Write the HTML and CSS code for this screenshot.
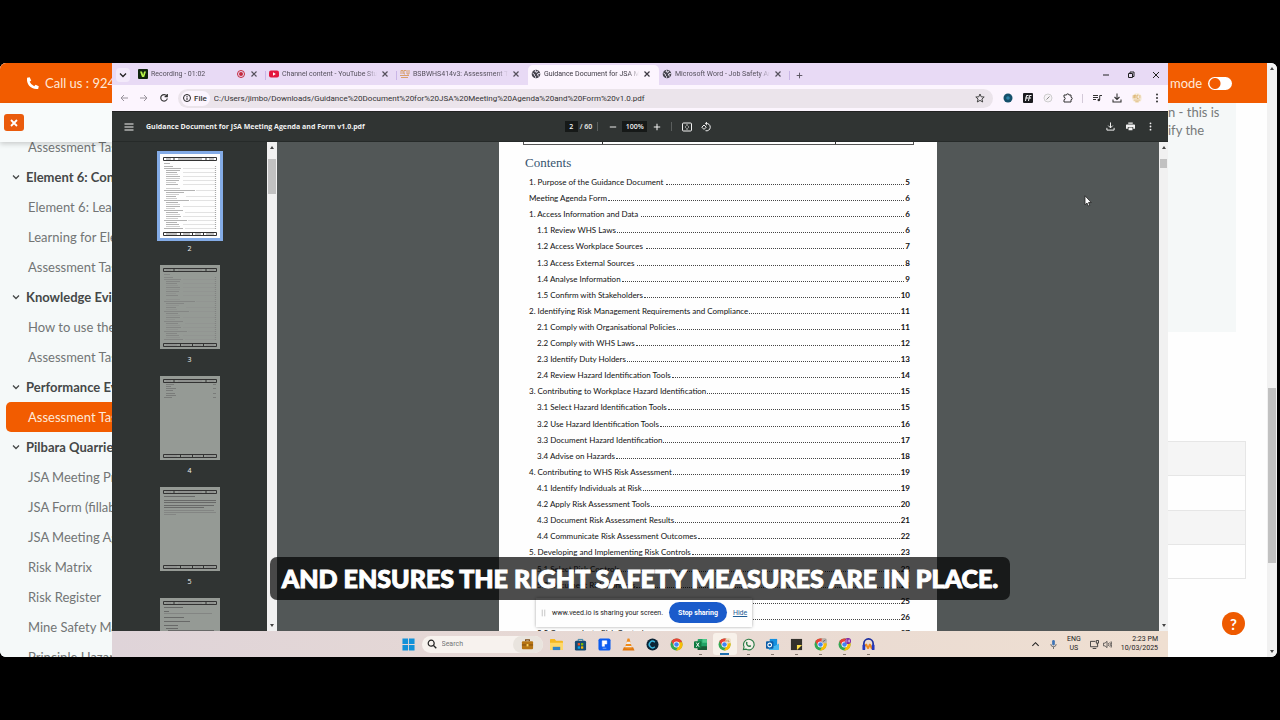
FILE: index.html
```
<!DOCTYPE html>
<html lang="en">
<head>
    <meta charset="UTF-8">
    <meta name="viewport" content="width=device-width, initial-scale=1.0">
    <title>Guidance Document for JSA Meeting Agenda and Form v1.0.pdf</title>
    <link rel="stylesheet" href="styles.css">
</head>
<body>
    <!-- Shared icon shapes -->
    <svg class="defs" width="0" height="0" aria-hidden="true">
        <symbol id="x" viewBox="0 0 10 10"><path d="M2.500 2.500l5 5M7.500 2.500l-5 5" fill="none" stroke="currentColor" stroke-width="1.200"/></symbol>
        <symbol id="chev" viewBox="0 0 10 10"><path d="M2 3.500l3 3 3-3" fill="none" stroke="currentColor" stroke-width="1.3"/></symbol>
        <symbol id="plus" viewBox="0 0 10 10"><path d="M5 1v8M1 5h8" fill="none" stroke="currentColor" stroke-width="1.3"/></symbol>
        <symbol id="minus" viewBox="0 0 10 10"><path d="M1 5h8" fill="none" stroke="currentColor" stroke-width="1.2"/></symbol>
        <symbol id="dots" viewBox="0 0 10 10"><g fill="currentColor"><circle cx="5" cy="1.5" r="1"/><circle cx="5" cy="5" r="1"/><circle cx="5" cy="8.5" r="1"/></g></symbol>
        <symbol id="download" viewBox="0 0 10 10"><path d="M5 .5v6M2.5 4L5 6.5 7.500 4M1 6.500V9h8V6.500" fill="none" stroke="currentColor" stroke-width="1.1"/></symbol>
        <symbol id="globe" viewBox="0 0 10 10"><circle cx="5" cy="5" r="4.300" fill="#484650"/><path d="M1.500 4l2 1.500v1l1 1v1.200M4.500 1.200l-.5 1.300 2 .8 .5-1.500M8.800 4.500l-2 .3-.3 1.400 1.300 1" fill="none" stroke="#f1e9f8" stroke-width="1"/></symbol>
        <symbol id="chrome" viewBox="0 0 24 24"><circle cx="12" cy="12" r="11" fill="#34a853"/><path d="M2.500 6.500A11 11 0 0 1 22.500 8H12l-4.500 6.500z" fill="#ea4335"/><path d="M22.500 8A11 11 0 0 1 11 23l5-8.700L12 8z" fill="#fbbc05"/><circle cx="12" cy="12" r="5.500" fill="#fff"/><circle cx="12" cy="12" r="4.200" fill="#4285f4"/></symbol>
        <symbol id="frame" viewBox="0 0 60 84">
            <path d="M3.500 3.500h53v3h-53zM14 3.500v3M46 3.500v3M3.500 78.500h53v3h-53zM20.500 78v4M32.500 78v4M43.500 78v4" fill="none" stroke="#333" stroke-width="1"/>
            <path d="M18 5h24M6 5h5M49 5h5M6 80h11M23 80h7M35 80h6M46 80h8" stroke="#888" stroke-width="1"/>
        </symbol>
        <symbol id="lines" viewBox="0 0 60 84">
            <path d="M4 9.500h6M4 12.500h9M4 14.500h17M6 16.500h14M6 18.500h11M6 22.500h14M6 26.500h13M6 30.500h12M4 36.500h31M6 38.500h18M6 42.500h10M4 46.500h25M6 48.500h12M6 52.500h14M4 56.500h19M6 58.500h12M6 62.500h15M4 66.500h23M6 68.500h11M6 70.500h13M4 74.500h19" stroke="#777" stroke-opacity=".8" stroke-width=".7"/>
            <path d="M6 20.500h12M6 24.500h14M6 28.500h10M6 34.500h14M6 40.500h13M6 44.500h11M6 50.500h14M6 54.500h9M6 60.500h14M6 64.500h12M6 72.500h14" stroke="#888" stroke-opacity=".8" stroke-width=".5"/>
            <path d="M23 14.500h33M23 18.500h33M23 22.500h33M23 26.500h33M23 30.500h33M36 36.500h20M26 42.500h30M30 46.500h26M23 52.500h33M25 58.500h31M23 62.500h33M28 66.500h28M23 70.500h33M25 74.500h31" stroke="#888" stroke-opacity=".6" stroke-width=".4"/>
            <path d="M55.500 12v63" stroke="#777" stroke-opacity=".6" stroke-width="1.200" stroke-dasharray="1 1"/>
        </symbol>
    </svg>

    <main class="screen">
        <!-- Course menu on the left -->
        <aside class="course">
            <div class="topbar">
                <svg class="phone" viewBox="0 0 12 12"><path d="M1 .8l2.400-.6 1.400 3-1.400 1.200a8 8 0 0 0 4.200 4.200l1.200-1.400 3 1.400-.6 2.400C5 12 0 7 1 .8z" fill="#fff"/></svg>
                <span>Call us : 9240</span>
            </div>
            <div class="closebar">
                <button class="close" aria-label="Close menu"><svg viewBox="0 0 10 10"><path d="M2 2l6 6M8 2l-6 6" stroke="#fff" stroke-width="1.800"/></svg></button>
            </div>
            <nav class="menu">
                <a href="#">Assessment Task</a>
                <a href="#" class="group"><svg viewBox="0 0 10 10"><use href="#chev"/></svg>Element 6: Contribute</a>
                <a href="#">Element 6: Learning</a>
                <a href="#">Learning for Element</a>
                <a href="#">Assessment Task</a>
                <a href="#" class="group"><svg viewBox="0 0 10 10"><use href="#chev"/></svg>Knowledge Evidence</a>
                <a href="#">How to use these</a>
                <a href="#">Assessment Task</a>
                <a href="#" class="group"><svg viewBox="0 0 10 10"><use href="#chev"/></svg>Performance Evidence</a>
                <a href="#" class="current">Assessment Task</a>
                <a href="#" class="group"><svg viewBox="0 0 10 10"><use href="#chev"/></svg>Pilbara Quarries</a>
                <a href="#">JSA Meeting Process</a>
                <a href="#">JSA Form (fillable)</a>
                <a href="#">JSA Meeting Agenda</a>
                <a href="#">Risk Matrix</a>
                <a href="#">Risk Register</a>
                <a href="#">Mine Safety Manual</a>
                <a href="#">Principle Hazards</a>
            </nav>
        </aside>

        <div class="desktop">
            <section class="browser">
                <div class="tabs">
                    <button class="tabsearch" aria-label="Search tabs"><svg viewBox="0 0 10 10"><use href="#chev"/></svg></button>
                    <div class="tab">
                        <svg viewBox="0 0 10 10"><rect width="10" height="10" rx="1" fill="#10240e"/><path d="M2 2.500h2L5.200 6 6 2.500h2L6.200 8H4z" fill="#b6f34a"/></svg>
                        <span>Recording - 01:02</span>
                        <svg viewBox="0 0 10 10"><circle cx="5" cy="5" r="3.500" fill="none" stroke="#c5283d"/><circle cx="5" cy="5" r="2" fill="#c5283d"/></svg>
                        <button aria-label="Close tab"><svg viewBox="0 0 10 10"><use href="#x"/></svg></button>
                    </div>
                    <div class="tab">
                        <svg viewBox="0 0 10 10"><rect y="1.500" width="10" height="7" rx="2" fill="#e3173f"/><path d="M4 3.300v3.400L6.800 5z" fill="#fff"/></svg>
                        <span>Channel content - YouTube Studio</span>
                        <button aria-label="Close tab"><svg viewBox="0 0 10 10"><use href="#x"/></svg></button>
                    </div>
                    <div class="tab noline">
                        <svg viewBox="0 0 10 10"><path d="M1 5V1.500h2V5M5 5H4V1.500h2M7 1v4h2V1M0 6.500h9M1 8.500h7" fill="none" stroke="#d9a06c"/></svg>
                        <span>BSBWHS414v3: Assessment Task</span>
                        <button aria-label="Close tab"><svg viewBox="0 0 10 10"><use href="#x"/></svg></button>
                    </div>
                    <div class="tab active">
                        <svg viewBox="0 0 10 10"><use href="#globe"/></svg>
                        <span>Guidance Document for JSA Meeting</span>
                        <button aria-label="Close tab"><svg viewBox="0 0 10 10"><use href="#x"/></svg></button>
                    </div>
                    <div class="tab">
                        <svg viewBox="0 0 10 10"><use href="#globe"/></svg>
                        <span>Microsoft Word - Job Safety Analysis</span>
                        <button aria-label="Close tab"><svg viewBox="0 0 10 10"><use href="#x"/></svg></button>
                    </div>
                    <button class="newtab" aria-label="New tab"><svg viewBox="0 0 10 10"><use href="#plus"/></svg></button>
                    <div class="winbtns">
                        <button aria-label="Minimize"><svg viewBox="0 0 10 10"><path d="M2 5h6" stroke="#222"/></svg></button>
                        <button aria-label="Restore"><svg viewBox="0 0 10 10"><path d="M2.500 3.500h4v4h-4zM4 3.500V2h4v4.500H6.500" fill="none" stroke="#222"/></svg></button>
                        <button aria-label="Close"><svg viewBox="0 0 10 10"><path d="M2 2l6 6M8 2l-6 6" stroke="#222"/></svg></button>
                    </div>
                </div>

                <div class="addressbar">
                    <button class="dim" aria-label="Back"><svg viewBox="0 0 10 10"><path d="M9 5H2M5 2L2 5l3 3" fill="none" stroke="currentColor"/></svg></button>
                    <button class="dim" aria-label="Forward"><svg viewBox="0 0 10 10"><path d="M1 5h7M5 2l3 3-3 3" fill="none" stroke="currentColor"/></svg></button>
                    <button aria-label="Reload"><svg viewBox="0 0 10 10"><path d="M7.800 3A3.300 3.300 0 1 0 8.300 5.500M8.300 1v2.700H5.600" fill="none" stroke="currentColor" stroke-width="1.200"/></svg></button>
                    <div class="omnibox">
                        <label class="chip" for="url"><svg viewBox="0 0 10 10"><circle cx="5" cy="5" r="3.500" fill="none" stroke="#222"/><path d="M5 4.500v2.500M5 3v1" stroke="#222"/></svg>File</label>
                        <input id="url" type="text" value="C:/Users/jimbo/Downloads/Guidance%20Document%20for%20JSA%20Meeting%20Agenda%20and%20Form%20v1.0.pdf">
                        <svg viewBox="0 0 10 10"><path d="M5 1l1.200 2.800 3 .2-2.300 2 .8 3L5 7.400 2.300 9l.8-3-2.300-2 3-.2z" fill="none" stroke="#444"/></svg>
                    </div>
                    <div class="extensions">
                        <button aria-label="Extension"><svg viewBox="0 0 10 10"><circle cx="5" cy="5" r="4.500" fill="#14506b"/><circle cx="5" cy="5" r="1.800" fill="#2b83a8"/></svg></button>
                        <button aria-label="Font finder"><svg viewBox="0 0 10 10"><rect width="10" height="10" rx="1" fill="#1b1b1f"/><path d="M2.500 8l1-5.500h2M2.500 5h2.500M5.500 8l1-5.500h2M5.600 5h2.500" fill="none" stroke="#fff"/></svg></button>
                        <button aria-label="Extension"><svg viewBox="0 0 10 10"><circle cx="5" cy="5" r="4" fill="#f6f2f6" stroke="#bbb" stroke-width=".7"/><path d="M3.500 6.500l3-3" stroke="#888"/></svg></button>
                        <button aria-label="Extensions"><svg viewBox="0 0 10 10"><path d="M1 2h2.500a1.200 1.200 0 0 1 2.400 0H8v2.300a1.200 1.200 0 0 1 0 2.400V9H1V6.700a1.200 1.200 0 0 0 0-2.400z" fill="none" stroke="#333"/></svg></button>
                        <i class="sep"></i>
                        <button aria-label="Media"><svg viewBox="0 0 10 10"><path d="M1 2.500h5M1 4.500h5M1 6.500h3M7.700 7V2.500H10" fill="none" stroke="#333"/><circle cx="6.800" cy="7" r="1.300" fill="#333"/></svg></button>
                        <button aria-label="Downloads"><svg viewBox="0 0 10 10"><use href="#download"/></svg></button>
                        <button aria-label="Profile"><svg viewBox="0 0 12 12"><circle cx="6" cy="6" r="6" fill="#f8efe2"/><path d="M1.500 2.500v4M3 6.500v-4h1.500v4M8 6.500H6v-4h2M9.500 2.500v4M2 8.500h8M4 10.500h4" fill="none" stroke="#d3a14f" stroke-width=".8"/></svg></button>
                        <button aria-label="Browser menu"><svg viewBox="0 0 10 10"><use href="#dots"/></svg></button>
                    </div>
                </div>

                <div class="pdfbar">
                    <div class="pdftitle">
                        <button aria-label="Menu"><svg viewBox="0 0 10 10"><path d="M0.500 2h9M0.500 5h9M0.500 8h9" stroke="currentColor" stroke-width="1.200"/></svg></button>
                        <span>Guidance Document for JSA Meeting Agenda and Form v1.0.pdf</span>
                    </div>
                    <div class="pdftools">
                        <input class="pageno" type="text" value="2" aria-label="Page number"><span>/ 60</span>
                        <i class="sep"></i>
                        <button aria-label="Zoom out"><svg viewBox="0 0 10 10"><use href="#minus"/></svg></button>
                        <input class="zoom" type="text" value="100%" aria-label="Zoom level">
                        <button aria-label="Zoom in"><svg viewBox="0 0 10 10"><use href="#plus"/></svg></button>
                        <i class="sep"></i>
                        <button aria-label="Fit to page"><svg viewBox="0 0 10 10"><rect x=".5" y="1" width="9" height="8" rx="1" fill="none" stroke="currentColor"/><path d="M5 2.300v1.500M5 6.200v1.500M3 5h1M6 5h1" stroke="currentColor"/></svg></button>
                        <button aria-label="Rotate"><svg viewBox="0 0 10 10"><path d="M5 1.500a3.700 3.700 0 1 1-.5 7.200M6 0L4.300 1.500 6 3.200M3 3L.8 5.200 3 7.400l2.200-2.200z" fill="none" stroke="currentColor"/></svg></button>
                    </div>
                    <div class="pdfactions">
                        <button aria-label="Download"><svg viewBox="0 0 10 10"><use href="#download"/></svg></button>
                        <button aria-label="Print"><svg viewBox="0 0 10 10"><path d="M2.500.5h5v1.500h-5zM0 3.500q0-.8.800-.8h8.400q.8 0 .8.800V7.500H8V5.500H2v2H0zM2.800 6.200h4.400v3H2.800z" fill="currentColor"/></svg></button>
                        <button aria-label="More"><svg viewBox="0 0 10 10"><use href="#dots"/></svg></button>
                    </div>
                </div>

                <div class="viewer">
                    <div class="thumbs">
                        <figure class="selected">
                            <svg viewBox="0 0 60 84"><use href="#frame"/><use href="#lines"/></svg>
                            <figcaption>2</figcaption>
                        </figure>
                        <figure>
                            <svg viewBox="0 0 60 84"><use href="#frame"/><use href="#lines"/></svg>
                            <figcaption>3</figcaption>
                        </figure>
                        <figure>
                            <svg viewBox="0 0 60 84"><use href="#frame"/><path d="M6 8.500h8M6 10.500h5M6 12.500h10M6 14.500h7M6 17.500h9M6 19.500h10M4 21.500h8M53 8.500h3M53 12.500h3M53 17.500h3M53 21.500h3" stroke="#666" stroke-width=".6"/></svg>
                            <figcaption>4</figcaption>
                        </figure>
                        <figure>
                            <svg viewBox="0 0 60 84"><use href="#frame"/><path d="M4 9.500h31M4 13.500h52M4 15.500h52M4 18.500h50M4 20.500h40" stroke="#555" stroke-width=".7"/><path d="M4 23.500h50M4 25.500h52M4 27.500h12" stroke="#777" stroke-width=".6"/></svg>
                            <figcaption>5</figcaption>
                        </figure>
                        <figure>
                            <svg viewBox="0 0 60 84"><use href="#frame"/><path d="M4 9.500h19M4 13.500h5M4 19.500h20M4 23.500h26M4 27.500h14M6 30.500h12M8 32.500h46" stroke="#555" stroke-width=".7"/><path d="M4 15.500h48" stroke="#777" stroke-width=".6"/></svg>
                        </figure>
                    </div>
                    <div class="scrollbar"><i class="up"></i><i class="grip long"></i><i class="down"></i></div>
                    <div class="canvas">
                        <article class="page">
                            <div class="headrow"><i></i><i></i><i></i></div>
                            <h1>Contents</h1>
                            <ol class="toc">
                                <li>1. Purpose of the Guidance Document <i></i><b>5</b></li>
                                <li>Meeting Agenda Form<i></i><b>6</b></li>
                                <li>1. Access Information and Data <i></i><b>6</b></li>
                                <li class="sub">1.1 Review WHS Laws<i></i><b>6</b></li>
                                <li class="sub">1.2 Access Workplace Sources <i></i><b>7</b></li>
                                <li class="sub">1.3 Access External Sources <i></i><b>8</b></li>
                                <li class="sub">1.4 Analyse Information<i></i><b>9</b></li>
                                <li class="sub">1.5 Confirm with Stakeholders<i></i><b>10</b></li>
                                <li>2. Identifying Risk Management Requirements and Compliance<i></i><b>11</b></li>
                                <li class="sub">2.1 Comply with Organisational Policies<i></i><b>11</b></li>
                                <li class="sub">2.2 Comply with WHS Laws<i></i><b>12</b></li>
                                <li class="sub">2.3 Identify Duty Holders<i></i><b>13</b></li>
                                <li class="sub">2.4 Review Hazard Identification Tools<i></i><b>14</b></li>
                                <li>3. Contributing to Workplace Hazard Identification<i></i><b>15</b></li>
                                <li class="sub">3.1 Select Hazard Identification Tools<i></i><b>15</b></li>
                                <li class="sub">3.2 Use Hazard Identification Tools<i></i><b>16</b></li>
                                <li class="sub">3.3 Document Hazard Identification<i></i><b>17</b></li>
                                <li class="sub">3.4 Advise on Hazards<i></i><b>18</b></li>
                                <li>4. Contributing to WHS Risk Assessment<i></i><b>19</b></li>
                                <li class="sub">4.1 Identify Individuals at Risk<i></i><b>19</b></li>
                                <li class="sub">4.2 Apply Risk Assessment Tools<i></i><b>20</b></li>
                                <li class="sub">4.3 Document Risk Assessment Results<i></i><b>21</b></li>
                                <li class="sub">4.4 Communicate Risk Assessment Outcomes<i></i><b>22</b></li>
                                <li>5. Developing and Implementing Risk Controls<i></i><b>23</b></li>
                                <li class="sub">5.1 Select Risk Controls<i></i><b>23</b></li>
                                <li class="sub">5.2 Document Risk Controls<i></i><b>24</b></li>
                                <li class="sub">5.3 Develop Risk Controls<i></i><b>25</b></li>
                                <li class="sub">5.4 Implement Risk Controls<i></i><b>26</b></li>
                                <li class="sub">5.5 Communicate Risk Controls<i></i><b>27</b></li>
                            </ol>
                        </article>
                    </div>
                    <div class="scrollbar"><i class="up"></i><i class="grip short"></i><i class="down"></i></div>
                </div>
            </section>

            <footer class="taskbar">
                <div class="apps">
                    <button aria-label="Start"><svg viewBox="0 0 14 14"><path d="M.5.500h6v6h-6zM7.500.500h6v6h-6zM.5 7.500h6v6h-6zM7.500 7.500h6v6h-6z" fill="#1291d8"/></svg></button>
                    <div class="search">
                        <svg viewBox="0 0 10 10"><circle cx="4.200" cy="4.200" r="3" fill="none" stroke="#222" stroke-width="1.200"/><path d="M6.500 6.500L9.300 9.300" stroke="#222" stroke-width="1.300"/></svg>
                        <input type="text" placeholder="Search" aria-label="Search">
                        <span class="case"><svg viewBox="0 0 14 14"><path d="M5 3.500V2h4v1.500" fill="none" stroke="#7b4a12" stroke-width="1.300"/><rect x="1" y="3.500" width="12" height="8.500" rx="1" fill="#b77513"/><path d="M1 7.500h12" stroke="#7b4a12"/><rect x="6" y="6.500" width="2" height="2.500" fill="#ffd65c"/></svg></span>
                    </div>
                    <button aria-label="Files"><svg viewBox="0 0 14 14"><path d="M0 2q0-1 1-1h4l1.500 2H13q1 0 1 1v8q0 1-1 1H1q-1 0-1-1z" fill="#f5b820"/><path d="M0 5h14v7q0 1-1 1H1q-1 0-1-1z" fill="#ffd867"/><path d="M3 13V9.500h8V13z" fill="#3285c7"/></svg></button>
                    <button aria-label="Store"><svg viewBox="0 0 14 14"><path d="M4.500 4V1.500h5V4" fill="none" stroke="#2e7ea8"/><rect x="1" y="3" width="12" height="10.500" rx="1.500" fill="#164b73"/><path d="M4 5.500h2.500V8H4z" fill="#f25022"/><path d="M7.500 5.500H10V8H7.500z" fill="#7fba00"/><path d="M4 9h2.500v2.500H4z" fill="#00a4ef"/><path d="M7.500 9H10v2.500H7.500z" fill="#ffb900"/></svg></button>
                    <button aria-label="Dropbox"><svg viewBox="0 0 14 14"><rect x=".5" y=".5" width="13" height="13" rx="2" fill="#0b5cf0"/><path d="M4.500 3h5v3.500H7V9H4.500zM5 11h4" fill="#fff" stroke="#fff" stroke-width=".5"/></svg></button>
                    <button aria-label="VLC"><svg viewBox="0 0 14 14"><path d="M2 10h10l1.500 3.500H.5z" fill="#e07912"/><path d="M6 .5h2l3 10.500q-4 1.500-8 0z" fill="#ef8a1c"/><path d="M5 4h4l.7 2.500H4.300zM3.700 8.500h6.600l.4 1.500H3.300z" fill="#eee"/></svg></button>
                    <button aria-label="Recorder"><svg viewBox="0 0 14 14"><circle cx="7" cy="7" r="6.500" fill="#0b2436"/><path d="M9.500 4.500A3.500 3.500 0 1 0 9.500 9.500" fill="none" stroke="#36b5dd" stroke-width="1.600"/></svg></button>
                    <button aria-label="Chrome"><svg viewBox="0 0 14 14"><use href="#chrome"/></svg></button>
                    <button class="run" aria-label="Excel"><svg viewBox="0 0 14 14"><rect x="4" y="1" width="10" height="12" rx="1" fill="#21a366"/><path d="M9 1h4q1 0 1 1v3H9z" fill="#4cc98a"/><path d="M4 9h10v3q0 1-1 1H4z" fill="#185c37"/><rect y="3.500" width="8" height="7.500" rx="1" fill="#107c41"/><path d="M2.500 5l3 4.500M5.500 5l-3 4.500" stroke="#fff"/></svg></button>
                    <button class="run on" aria-label="Chrome, profile 1"><svg viewBox="0 0 14 14"><use href="#chrome"/><circle cx="11" cy="3" r="3" fill="#eee0c8"/><path d="M9.500 2v2M11 2v2h1.500" stroke="#a77a3a" stroke-width=".7" fill="none"/></svg></button>
                    <button class="run" aria-label="WhatsApp"><svg viewBox="0 0 14 14"><path d="M1.500 12.500l.7-3A5.700 5.700 0 1 1 4.500 12z" fill="#f4efe8" stroke="#2a7c46" stroke-width="1.200"/><path d="M4.500 4.300q.8-.8 1.300.2l.3 1-.6.800q.8 1.500 2.200 2.100l.8-.8 1.400.7q0 1.500-1.700 1.500-3.700-.8-4-4.200 0-.8.300-1.300z" fill="#2a7c46"/></svg></button>
                    <button class="run" aria-label="Outlook"><svg viewBox="0 0 14 14"><path d="M4 1h8v8H4z" fill="#1490df"/><path d="M3 6l6 3 5-3v6q0 1-1 1H4q-1 0-1-1z" fill="#42b7f0"/><rect y="3.500" width="8" height="8" rx="1" fill="#0a5ca8"/><circle cx="4" cy="7.500" r="2" fill="none" stroke="#fff" stroke-width="1.200"/></svg></button>
                    <button class="run" aria-label="Sticky Notes"><svg viewBox="0 0 14 14"><path d="M1 1h12v12H1z" fill="#34322c"/><path d="M7.500 13V7.500H13z" fill="#ffe14a"/></svg></button>
                    <button class="run" aria-label="Chrome, profile 2"><svg viewBox="0 0 14 14"><use href="#chrome"/><circle cx="11" cy="3" r="3" fill="#bbb4ad"/><path d="M9.500 4l3-2" stroke="#666"/></svg></button>
                    <button class="run" aria-label="Chrome, profile 3"><svg viewBox="0 0 14 14"><use href="#chrome"/><circle cx="10.800" cy="3.200" r="3.200" fill="#7a1fa2"/><path d="M10.300 2.300a1.200 1.200 0 1 0 0 1.800M11.500 2v2.400h1V2z" fill="none" stroke="#fff" stroke-width=".6"/></svg></button>
                    <button class="run" aria-label="Audacity"><svg viewBox="0 0 14 14"><path d="M2 8V6a5 5 0 0 1 10 0v2" fill="none" stroke="#1b2d9e" stroke-width="1.800"/><path d="M3.500 9q1-4 2 0t2 0 2 0 1 0" fill="none" stroke="#f08a1a" stroke-width="2"/><rect x=".5" y="7" width="3" height="6" rx="1" fill="#2438c0"/><rect x="10.500" y="7" width="3" height="6" rx="1" fill="#2438c0"/></svg></button>
                </div>
                <div class="tray">
                    <svg viewBox="0 0 10 10"><path d="M1.500 6.500L5 3l3.500 3.500" fill="none" stroke="#222" stroke-width="1.200"/></svg>
                    <svg viewBox="0 0 10 10"><rect x="3.500" y="0" width="3" height="6" rx="1.500" fill="#3f74b5"/><path d="M2 4.500a3 3 0 0 0 6 0M5 7.500V10" fill="none" stroke="#666"/></svg>
                    <span class="lang">ENG<br>US</span>
                    <span class="status">
                        <svg viewBox="0 0 10 10"><path d="M6 1.500H.5v6h8V5M3 9.500h4M7 .5h2.500v3H7zM8.200 3.500v2" fill="none" stroke="#333"/></svg>
                        <svg viewBox="0 0 10 10"><path d="M.5 3.500h1.700L4.500 1.500v7L2.200 6.500H.5zM6 3.500q1 1.500 0 3M7.500 2.500q2 2.500 0 5M9 1.500q1.500 3.500 0 7" fill="none" stroke="#333" stroke-width=".8"/></svg>
                    </span>
                    <time>2:23 PM<br>10/03/2025</time>
                </div>
            </footer>
        </div>

        <!-- Course page on the right -->
        <section class="lesson">
            <div class="topbar">
                <label for="mode">mode</label>
                <input id="mode" type="checkbox">
            </div>
            <div class="note">n - this is<br>ify the</div>
            <table>
                <tr><td></td></tr>
                <tr><td></td></tr>
                <tr><td></td></tr>
                <tr><td></td></tr>
            </table>
            <button class="help">?</button>
        </section>
        <div class="scrollbar outer"><i class="up"></i><i class="grip"></i><i class="down"></i></div>

        <div class="sharing">
            <svg viewBox="0 0 6 10"><path d="M1.500 1v8M4.500 1v8" stroke="#bbb"/></svg>
            <span>www.veed.io is sharing your screen.</span>
            <button>Stop sharing</button>
            <a href="#">Hide</a>
        </div>
        <svg class="cursor" viewBox="0 0 8 12"><path d="M1 .8v9l2-1.800 1.300 3 1.500-.7L4.500 7.500h2.800z" fill="#fff" stroke="#222" stroke-width=".8"/></svg>
        <p class="caption">AND ENSURES THE RIGHT SAFETY MEASURES ARE IN PLACE.</p>
    </main>
</body>
</html>
```
FILE: styles.css
```
* {
    box-sizing: border-box;
}
body {
    margin: 0;
    padding: 63px 0;
    min-height: 100vh;
    background: #000;
    font-family: Roboto, "Noto Sans", sans-serif;
    font-size: 7px;
    color: #222;
}
.defs {
    position: absolute;
}
button, input {
    font: inherit;
    color: inherit;
    padding: 0;
    border: none;
    background: none;
}
button {
    display: flex;
    align-items: center;
    justify-content: center;
    cursor: pointer;
}
svg {
    display: block;
    flex: none;
    width: 10px;
    height: 10px;
}
.screen {
    position: relative;
    display: grid;
    grid-template-columns: 112px 1fr 99px 10px;
    grid-template-rows: 100%;
    height: calc(100vh - 126px);
    margin-right: 3px;
    border-radius: 6px;
    overflow: hidden;
    background: #fefefe;
}

/* left menu */
.course {
    overflow: hidden;
    background: #f5f9f9;
    font-family: Lato, sans-serif;
    font-size: 13px;
    white-space: nowrap;
    color: #727575;
}
.topbar {
    display: flex;
    align-items: center;
    height: 40px;
    background: #f25c00;
    color: #ffe9d8;
    font-family: Lato, sans-serif;
    font-size: 13px;
}
.course .topbar {
    gap: 6px;
    padding-left: 26px;
}
.phone {
    width: 13px;
    height: 13px;
}
.closebar {
    position: relative;
    height: 39px;
    padding: 11px 4px;
    background: #f8fbfb;
    box-shadow: 0 2px 5px rgba(0, 0, 0, .18);
}
.close {
    width: 20px;
    height: 17px;
    border-radius: 3px;
    background: #ea5b0c;
}
.menu {
    margin-top: -10px;
}
.menu a {
    display: flex;
    align-items: center;
    height: 30px;
    padding-left: 28px;
    color: inherit;
    text-decoration: none;
}
.menu .group {
    gap: 5px;
    padding-left: 11px;
    font-weight: bold;
    color: #454848;
}
.menu .current {
    margin-left: 6px;
    padding-left: 22px;
    border-radius: 5px 0 0 5px;
    background: #f25c00;
    color: #ffe9d8;
}

/* browser window */
.desktop {
    display: flex;
    flex-direction: column;
    min-width: 0;
    min-height: 0;
}
.browser {
    flex: 1;
    min-height: 0;
    display: flex;
    flex-direction: column;
    background: #303433;
}
.tabs {
    display: flex;
    align-items: center;
    height: 22px;
    padding: 2px 0 0 4px;
    background: #e8daf5;
    color: #55505c;
}
.tabsearch {
    width: 14px;
    height: 14px;
    margin-right: 5px;
    border-radius: 4px;
    background: #f3eafa;
    color: #222;
}
.tab {
    display: flex;
    align-items: center;
    gap: 3px;
    width: 131px;
    height: 100%;
    padding: 0 7px 2px 3px;
    background: linear-gradient(#c9b5e6, #c9b5e6) right center / 1px 9px no-repeat;
}
.tab span {
    flex: 1;
    overflow: hidden;
    white-space: nowrap;
    -webkit-mask-image: linear-gradient(to right, #000 88%, transparent);
    mask-image: linear-gradient(to right, #000 88%, transparent);
}
.tab.noline {
    background: none;
}
.tab.active {
    border-radius: 5px 5px 0 0;
    background: #fcf5fe;
    color: #3c3842;
}
.newtab {
    width: 18px;
}
.newtab svg {
    width: 7px;
    height: 7px;
}
.winbtns {
    display: flex;
    margin-left: auto;
    color: #222;
}
.winbtns button {
    width: 25px;
}
.addressbar {
    display: flex;
    align-items: center;
    height: 26px;
    padding-left: 2px;
    background: #fcf5fe;
    color: #333;
}
.addressbar button {
    width: 20px;
}
.addressbar .dim {
    color: #99939c;
}
.omnibox {
    flex: 1;
    display: flex;
    align-items: center;
    gap: 4px;
    height: 19px;
    margin: 0 5px 0 4px;
    padding: 0 8px 0 3px;
    border-radius: 10px;
    background: #ebe4eb;
    font-size: 8px;
}
.omnibox input {
    flex: 1;
}
.chip {
    display: flex;
    align-items: center;
    gap: 2px;
    height: 15px;
    padding: 0 3px 0 1px;
    border-radius: 8px;
    background: #fcf5fe;
    font-weight: 500;
}
.extensions {
    display: flex;
    align-items: center;
    padding-right: 1px;
}
.sep {
    width: 1px;
    height: 9px;
    margin: 0 5px;
    background: #d3c9d8;
}
.extensions .sep {
    margin: 0 4px;
}
.pdfbar {
    display: grid;
    grid-template-columns: 1fr auto 1fr;
    align-items: center;
    height: 31px;
    border-top: 1px solid #222;
    border-bottom: 1px solid #262a29;
    background: #303433;
    color: #f1f1f1;
    font-family: "Open Sans", "Noto Sans", sans-serif;
}
.pdftitle {
    display: flex;
    align-items: center;
    gap: 12px;
    padding-left: 12px;
    font-weight: bold;
    white-space: nowrap;
}
.pdftools {
    display: flex;
    align-items: center;
    font-weight: 600;
}
.pdftools input {
    height: 11px;
    background: #161918;
    text-align: center;
}
.pdftools button {
    width: 19px;
}
.pdftools button:nth-of-type(1) svg,
.pdftools button:nth-of-type(2) svg {
    width: 8px;
    height: 8px;
}
.pdftools .sep {
    background: #5a5e5d;
}
.pageno {
    width: 13px;
    margin-right: 2px;
}
.zoom {
    width: 25px;
}
.pdfactions {
    display: flex;
    justify-content: flex-end;
    padding-right: 8px;
}
.pdfactions button {
    width: 20px;
}
.pdfactions svg {
    width: 9px;
    height: 9px;
}

/* pdf viewer */
.viewer {
    flex: 1;
    min-height: 0;
    display: grid;
    grid-template-columns: 155px 10px 1fr 9px;
    grid-template-rows: 100%;
}
.thumbs {
    overflow: hidden;
    padding-top: 12px;
    color: #f1f1f1;
    font-family: "Open Sans", "Noto Sans", sans-serif;
}
.thumbs figure {
    width: 60px;
    height: 111px;
    margin: 0 auto;
    text-align: center;
}
.thumbs svg {
    width: 60px;
    height: 84px;
    background: #959a95;
}
.thumbs .selected svg {
    background: #fefefe;
    outline: 3px solid #83abe6;
}
.thumbs figcaption {
    padding-top: 6px;
    line-height: 10px;
}
.scrollbar {
    display: flex;
    flex-direction: column;
    align-items: center;
    background: #f1f1f1;
}
.scrollbar .up, .scrollbar .down {
    margin: 4px 0;
    border: 2px solid transparent;
    border-top: none;
    border-bottom: 3px solid #444;
}
.scrollbar .down {
    margin-top: auto;
    border-bottom: none;
    border-top: 3px solid #444;
}
.grip {
    align-self: stretch;
    margin: 6px 1px 0;
    background: #c1c1c1;
}
.grip.long {
    height: 35px;
}
.grip.short {
    height: 9px;
}
.outer .grip {
    height: 175px;
    margin-top: 314px;
}
.canvas {
    overflow: hidden;
    background: #525757;
}
.page {
    width: 438px;
    height: 100%;
    margin: 0 auto;
    padding: 0 27px 0 26px;
    background: #fefefe;
    font-family: Lato, sans-serif;
    font-size: 8px;
    color: #111;
}
.headrow {
    display: grid;
    grid-template-columns: 78px 1fr 78px;
    height: 3px;
    margin: 0 -4px 0 -2px;
    border: 1px solid #555;
    border-top: none;
}
.headrow i + i {
    border-left: 1px solid #333;
}
.page h1 {
    margin: 9px 0 10px;
    font-family: "Liberation Serif", serif;
    font-size: 13px;
    line-height: 18px;
    height: 10px;
    font-weight: normal;
    color: #36546f;
}
.toc {
    display: grid;
    grid-auto-rows: 1fr;
    height: 467px;
    margin: 0;
    padding: 0 0 0 4px;
    list-style: none;
}
.toc li {
    display: flex;
    align-items: center;
    white-space: pre;
}
.toc .sub {
    padding-left: 8px;
}
.toc i {
    flex: 1;
    height: 6px;
    margin: 0 1px;
    border-bottom: 1px dotted #444;
}

/* taskbar */
.taskbar {
    display: grid;
    grid-template-columns: 1fr auto 1fr;
    align-items: center;
    height: 26px;
    background: linear-gradient(to right, #dfd4d9, #e6d8d4 40%, #efdfd1);
}
.apps {
    grid-column: 2;
    display: flex;
    align-items: center;
}
.apps button {
    position: relative;
    width: 24px;
    height: 22px;
}
.apps svg {
    width: 13px;
    height: 13px;
}
.apps button:first-child {
    width: 18px;
}
.apps .run::after {
    content: "";
    position: absolute;
    bottom: 0;
    width: 3px;
    height: 1px;
    background: #84776e;
}
.apps .on {
    border-radius: 3px;
    background: #f8f1ea;
}
.apps .on::after {
    width: 9px;
    height: 2px;
    background: #1f6fae;
}
.search {
    display: flex;
    align-items: center;
    gap: 5px;
    width: 121px;
    height: 17px;
    margin: 0 2px 0 4px;
    padding-left: 5px;
    border-radius: 9px;
    background: #f7f2ee;
}
.search > svg {
    width: 10px;
    height: 10px;
}
.search input {
    flex: 1;
    width: 20px;
}
.case {
    display: flex;
    justify-content: center;
    width: 30px;
    padding: 2px 0;
    border-radius: 9px;
    background: #e9e4de;
}
.tray {
    display: flex;
    align-items: center;
    justify-content: flex-end;
    gap: 9px;
    padding-right: 10px;
    line-height: 9px;
}
.tray svg {
    width: 9px;
    height: 9px;
}
.status {
    display: flex;
    gap: 4px;
}
.lang {
    text-align: center;
}
.tray time {
    text-align: right;
}

/* right page */
.lesson {
    position: relative;
    overflow: hidden;
    background: #fefefe;
    font-family: Lato, sans-serif;
    font-size: 13px;
}
.lesson .topbar {
    gap: 6px;
    padding-left: 2px;
}
#mode {
    appearance: none;
    width: 24px;
    height: 13px;
    margin: 0;
    border-radius: 7px;
    background: radial-gradient(circle at 7px 50%, #f25c00 5px, #fff 6px);
}
.note {
    height: 229px;
    margin-right: 31px;
    background: #f5f8f8;
    line-height: 18px;
    white-space: nowrap;
    color: #777a7a;
}
.lesson table {
    width: 78px;
    height: 138px;
    margin-top: 109px;
    border-collapse: collapse;
}
.lesson td {
    padding: 0;
    border: 1px solid #e6e6e6;
    border-left: none;
}
.lesson tr:nth-child(odd) {
    background: #f5f5f5;
}
.help {
    position: absolute;
    right: 22px;
    bottom: 22px;
    width: 23px;
    height: 23px;
    border-radius: 50%;
    background: #ee5a00;
    color: #fff;
    font-size: 15px;
    font-weight: bold;
}

/* overlays */
.sharing {
    position: absolute;
    left: 536px;
    bottom: 30px;
    display: flex;
    align-items: center;
    gap: 6px;
    height: 29px;
    padding: 0 5px;
    background: #fefefe;
    box-shadow: 0 0 3px rgba(0, 0, 0, .35);
    white-space: nowrap;
}
.sharing svg {
    width: 5px;
}
.sharing button {
    height: 21px;
    padding: 0 9px;
    border-radius: 11px;
    background: #1a5bcb;
    color: #fff;
    font-weight: bold;
}
.sharing a {
    color: #1f5c94;
}
.cursor {
    position: absolute;
    left: 1084px;
    top: 132px;
    width: 8px;
    height: 12px;
}
.caption {
    position: absolute;
    left: 0;
    right: -3px;
    bottom: 57px;
    width: fit-content;
    margin: 0 auto;
    padding: 0 12px;
    border-radius: 7px;
    background: rgba(0, 0, 0, .7);
    color: #fff;
    font-family: Lato, sans-serif;
    font-size: 25px;
    font-weight: 900;
    line-height: 43px;
    white-space: nowrap;
    -webkit-text-stroke: 1px #fff;
}
```
